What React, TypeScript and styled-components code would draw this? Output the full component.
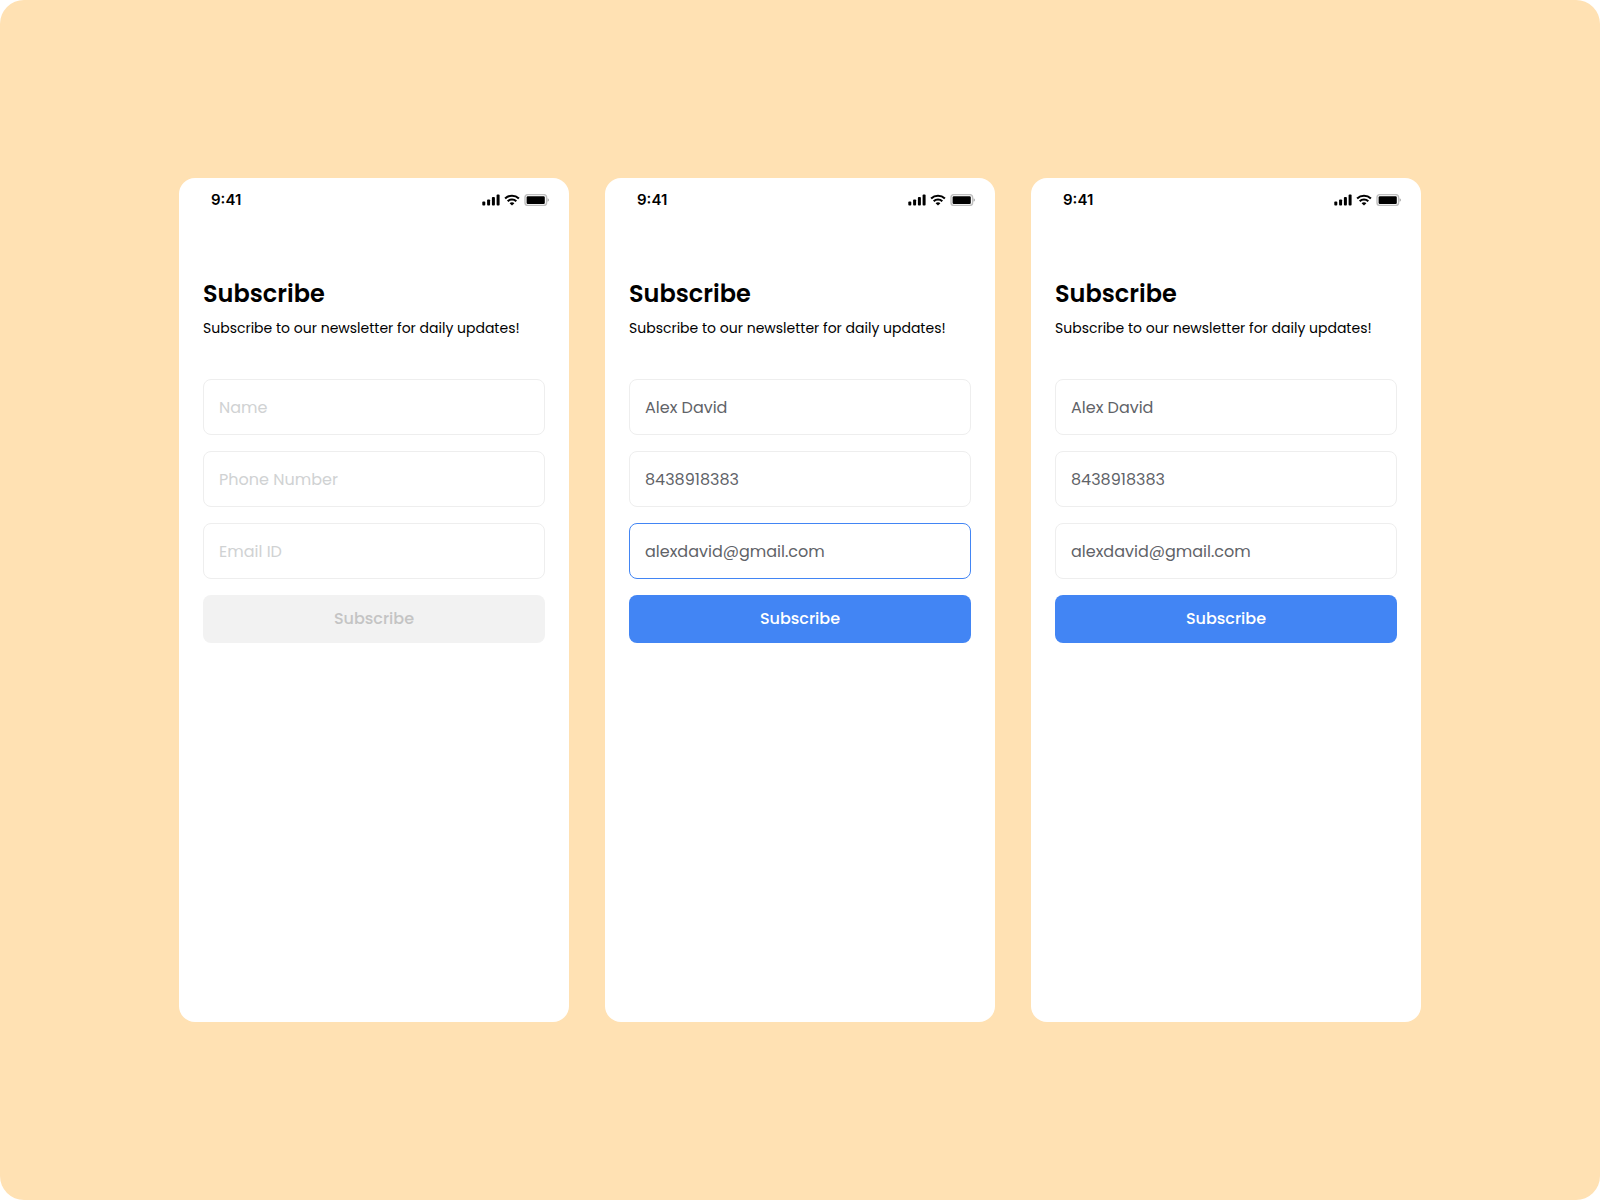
import React, { useId } from "react";
import styled, { createGlobalStyle } from "styled-components";

const GlobalStyle = createGlobalStyle`
  *, *::before, *::after { box-sizing: border-box; }
  body {
    margin: 0;
    background: #ffffff;
    font-family: Poppins, Inter, "Liberation Sans", sans-serif;
    color: #000000;
  }
`;

const Stage = styled.main`
  min-height: 100vh;
  display: grid;
  grid-template-columns: repeat(3, minmax(0, 390px));
  gap: 36px;
  justify-content: center;
  align-content: center;
  padding: 24px;
  background: #ffe1b3;
  border-radius: 24px;
`;

const Phone = styled.section`
  display: flex;
  flex-direction: column;
  min-height: 844px;
  background: #ffffff;
  border-radius: 16px;
`;

const StatusBar = styled.header`
  display: flex;
  align-items: center;
  justify-content: space-between;
  height: 44px;
  padding: 0 20px 0 32px;
`;

const Time = styled.time`
  font-family: Inter, "Liberation Sans", sans-serif;
  font-size: 15px;
  line-height: 20px;
  font-weight: 600;
`;

const StatusIcons = styled.div`
  display: flex;
  align-items: center;
  gap: 4px;
`;

const Content = styled.div`
  display: flex;
  flex-direction: column;
  gap: 40px;
  padding: 54px 24px 24px;
`;

const Intro = styled.div`
  display: flex;
  flex-direction: column;
  gap: 6px;
`;

const Title = styled.h1`
  margin: 0;
  font-size: 24px;
  line-height: 36px;
  font-weight: 600;
`;

const Subtitle = styled.p`
  margin: 0;
  font-size: 14px;
  line-height: 21px;
  white-space: nowrap;
`;

const Form = styled.form`
  display: flex;
  flex-direction: column;
  gap: 16px;
`;

const Label = styled.label`
  display: flex;
`;

const Field = styled.input<{ $active: boolean }>`
  flex: 1;
  min-width: 0;
  height: 56px;
  padding: 0 15px;
  border: 1px solid ${(p) => (p.$active ? "#4285f4" : "#eeeeee")};
  border-radius: 8px;
  outline: none;
  background: #ffffff;
  color: #5f6368;
  font-family: inherit;
  font-size: 16px;
  line-height: 24px;

  &::placeholder {
    color: #d0d2d3;
    opacity: 1;
  }
  &:focus {
    border-color: #4285f4;
  }
`;

const SubmitButton = styled.button`
  height: 48px;
  border: 0;
  border-radius: 8px;
  background: #4285f4;
  color: #ffffff;
  font-family: inherit;
  font-size: 16px;
  line-height: 24px;
  font-weight: 500;
  cursor: pointer;

  &:disabled {
    background: #f2f2f2;
    color: #c4c4c4;
    cursor: default;
  }
`;

function SignalIcon() {
  return (
    <svg width="18" height="12" viewBox="0 0 18 12" aria-hidden="true">
      <rect x="0.3" y="7.6" width="3" height="3.9" rx="0.9" />
      <rect x="5.1" y="5.4" width="3" height="6.1" rx="0.9" />
      <rect x="9.9" y="3" width="3" height="8.5" rx="0.9" />
      <rect x="14.6" y="0.5" width="3" height="11" rx="0.9" />
    </svg>
  );
}

function WifiIcon() {
  return (
    <svg width="16" height="12" viewBox="0 0 16 12" aria-hidden="true">
      <g fill="none" stroke="#000000" strokeWidth="2.1">
        <path d="M1.1 4.5C5 0.8 11 0.8 14.9 4.5" />
        <path d="M3.7 7.2C6.1 4.9 9.9 4.9 12.3 7.2" />
      </g>
      <path d="M8 11.6L5.6 9.2C6.9 8 9.1 8 10.4 9.2Z" />
    </svg>
  );
}

function BatteryIcon() {
  return (
    <svg width="25" height="12" viewBox="0 0 25 12" aria-hidden="true">
      <rect x="1" y="0.6" width="21.6" height="10.8" rx="3" fill="none" stroke="#000000" strokeOpacity="0.25" strokeWidth="1.4" />
      <path d="M23.7 4.2C25.2 5 25.2 7 23.7 7.8Z" fillOpacity="0.4" />
      <rect x="2.6" y="2.2" width="18.2" height="7.8" rx="1.2" />
    </svg>
  );
}

interface ScreenData {
  name: string;
  phone: string;
  email: string;
  active?: "name" | "phone" | "email";
}

const screens: ScreenData[] = [
  { name: "", phone: "", email: "" },
  { name: "Alex David", phone: "8438918383", email: "alexdavid@gmail.com", active: "email" },
  { name: "Alex David", phone: "8438918383", email: "alexdavid@gmail.com" },
];

const fields = [
  { key: "name", type: "text", label: "Name" },
  { key: "phone", type: "tel", label: "Phone Number" },
  { key: "email", type: "email", label: "Email ID" },
] as const;

function SubscribeScreen({ data }: { data: ScreenData }) {
  const id = useId();
  const complete = fields.every((f) => data[f.key] !== "");
  return (
    <Phone>
      <StatusBar>
        <Time>9:41</Time>
        <StatusIcons>
          <SignalIcon />
          <WifiIcon />
          <BatteryIcon />
        </StatusIcons>
      </StatusBar>
      <Content>
        <Intro>
          <Title>Subscribe</Title>
          <Subtitle>Subscribe to our newsletter for daily updates!</Subtitle>
        </Intro>
        <Form onSubmit={(e) => e.preventDefault()}>
          {fields.map((f) => (
            <Label key={f.key} htmlFor={`${id}-${f.key}`}>
              <Field
                id={`${id}-${f.key}`}
                type={f.type}
                aria-label={f.label}
                placeholder={f.label}
                defaultValue={data[f.key]}
                $active={data.active === f.key}
              />
            </Label>
          ))}
          <SubmitButton type="submit" disabled={!complete}>
            Subscribe
          </SubmitButton>
        </Form>
      </Content>
    </Phone>
  );
}

export default function App() {
  return (
    <>
      <GlobalStyle />
      <Stage>
        {screens.map((screen, i) => (
          <SubscribeScreen key={i} data={screen} />
        ))}
      </Stage>
    </>
  );
}
